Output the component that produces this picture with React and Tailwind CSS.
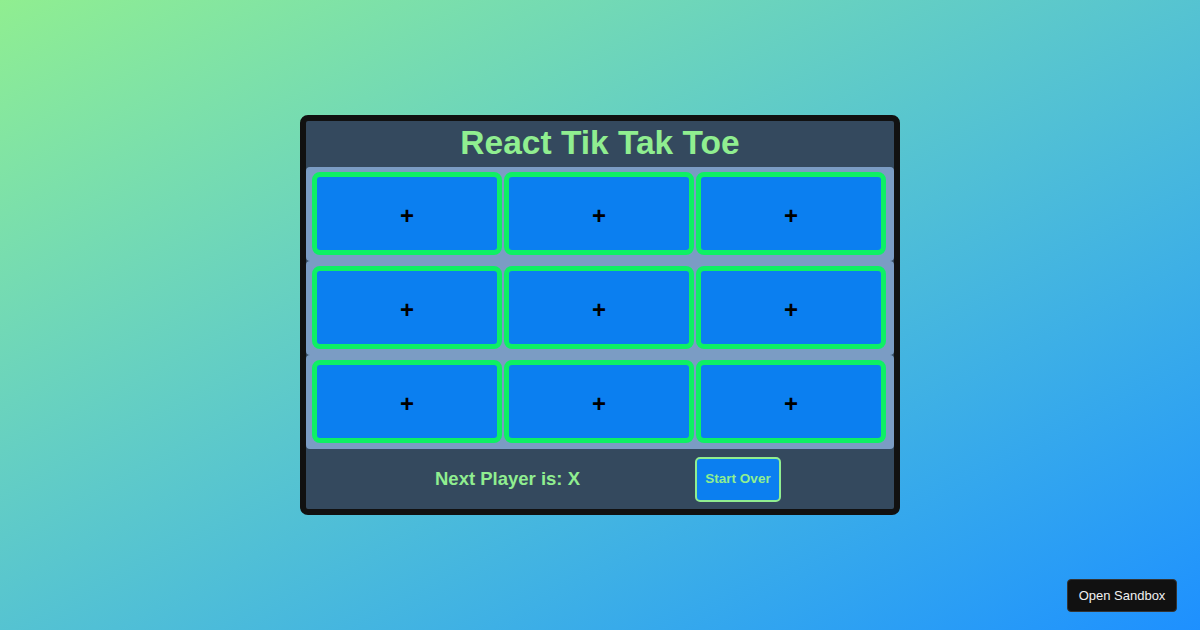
import { useState } from "react"

function Cell({ value, onClick }) {
    return (
        <button
            onClick={onClick}
            className="w-[190px] h-[83px] border-[5px] border-[#0ef064] rounded-[8px] bg-[#0b7ff0] flex items-center justify-center pt-[5px] text-black text-[24px] font-bold leading-none"
        >
            {value || "+"}
        </button>
    )
}

function App() {
    const [squares, setSquares] = useState(Array(9).fill(null))
    const [xNext, setXNext] = useState(true)

    const handleClick = (i) => {
        if (squares[i]) return
        const next = [...squares]
        next[i] = xNext ? "X" : "O"
        setSquares(next)
        setXNext(!xNext)
    }

    const rows = [0, 1, 2]

    return (
        <div
            className="relative w-full h-[630px] flex items-center justify-center bg-gradient-to-br from-[#90ee90] to-[#1e90ff]"
            style={{ fontFamily: '"Liberation Sans", Arial, sans-serif' }}
        >
            <div className="w-[600px] h-[400px] border-[6px] border-[#111111] rounded-[8px] bg-[#34495e] flex flex-col">
                <h1 className="h-[46px] flex items-center justify-center text-[33.5px] font-bold text-[#90ee90] pb-[2px]">
                    React Tik Tak Toe
                </h1>
                <div className="flex flex-col">
                    {rows.map((r) => (
                        <div key={r} className="flex gap-[2px] pt-[5px] pb-[6px] px-[6px] rounded-[4px] bg-[#7b9cc4]">
                            {rows.map((c) => (
                                <Cell
                                    key={c}
                                    value={squares[r * 3 + c]}
                                    onClick={() => handleClick(r * 3 + c)}
                                />
                            ))}
                        </div>
                    ))}
                </div>
                <div className="flex-1 flex items-center pl-[129px] gap-[115px]">
                    <p className="text-[18.5px] font-bold text-[#90ee90]">
                        Next Player is: {xNext ? "X" : "O"}
                    </p>
                    <button
                        onClick={() => { setSquares(Array(9).fill(null)); setXNext(true) }}
                        className="w-[86px] h-[45px] border-2 border-[#90ee90] rounded-[5px] bg-[#0b7ff0] text-[13.5px] font-bold text-[#90ee90]"
                    >
                        Start Over
                    </button>
                </div>
            </div>

            <button className="absolute right-[23px] bottom-[18px] w-[110px] h-[33px] rounded-[4px] bg-[#111111] border border-[#333333] text-[13px] text-[#f0f0f0]">
                Open Sandbox
            </button>
        </div>
    )
}

export default App
